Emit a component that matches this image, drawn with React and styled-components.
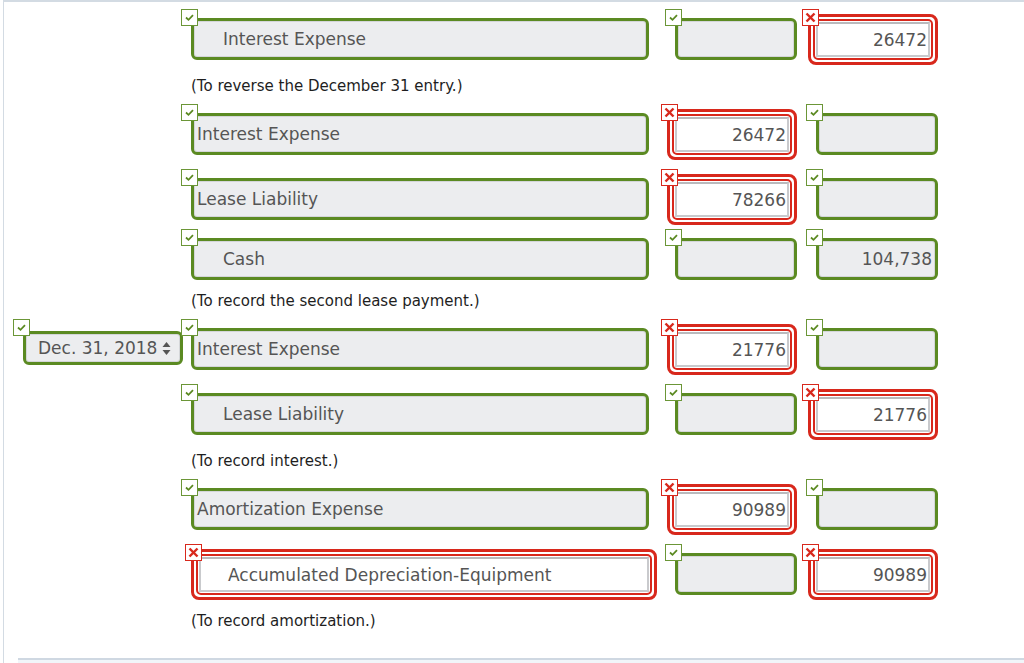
import React from 'react'
import styled, { createGlobalStyle } from 'styled-components'

const GlobalStyle = createGlobalStyle`
    html, body {
        margin: 0;
        padding: 0;
        background: #fff;
    }
    body {
        font-family: "DejaVu Sans", Verdana, sans-serif;
        overflow: hidden;
    }
`

const entries = [
    { account: 'Interest Expense', indent: true, debit: '', debitOk: true, credit: '26472', creditOk: false },
    { note: '(To reverse the December 31 entry.)' },
    { account: 'Interest Expense', debit: '26472', debitOk: false, credit: '', creditOk: true },
    { account: 'Lease Liability', debit: '78266', debitOk: false, credit: '', creditOk: true, height: 60 },
    { account: 'Cash', indent: true, debit: '', debitOk: true, credit: '104,738', creditOk: true },
    { note: '(To record the second lease payment.)' },
    { date: 'Dec. 31, 2018', account: 'Interest Expense', debit: '21776', debitOk: false, credit: '', creditOk: true },
    { account: 'Lease Liability', indent: true, debit: '', debitOk: true, credit: '21776', creditOk: false },
    { note: '(To record interest.)' },
    { account: 'Amortization Expense', debit: '90989', debitOk: false, credit: '', creditOk: true },
    { account: 'Accumulated Depreciation-Equipment', indent: true, accountOk: false, debit: '', debitOk: true, credit: '90989', creditOk: false },
    { note: '(To record amortization.)' }
]

function Mark({ ok }) {
    return (
        <MarkBox ok={ok}>
            <svg width="15" height="15" viewBox="0 0 15 15">
                {ok ? (
                    <polyline points="4,7.5 6.5,9.8 11,5.2" fill="none" stroke="#5b8a22" strokeWidth="1.8" />
                ) : (
                    <g stroke="#d8281c" strokeWidth="2.4" strokeLinecap="butt">
                        <line x1="3.5" y1="3.5" x2="11.5" y2="11.5" />
                        <line x1="11.5" y1="3.5" x2="3.5" y2="11.5" />
                    </g>
                )}
            </svg>
        </MarkBox>
    )
}

function Field({ ok = true, width, value, indent, numeric }) {
    return (
        <FieldWrap ok={ok}>
            <Mark ok={ok} />
            {ok ? (
                <GreenBox width={width}>
                    <FieldText indent={indent} numeric={numeric}>{value}</FieldText>
                </GreenBox>
            ) : (
                <RedOuter width={width + 8}>
                    <RedInner>
                        <RedField>
                            <FieldText indent={indent} numeric={numeric}>{value}</FieldText>
                        </RedField>
                    </RedInner>
                </RedOuter>
            )}
        </FieldWrap>
    )
}

function EntryRow({ date, account, indent, accountOk = true, debit, debitOk, credit, creditOk, height }) {
    const tall = !accountOk || !debitOk || !creditOk
    return (
        <Row height={height || (tall ? 65 : 60)}>
            <Cell width={160}>
                {date && (
                    <FieldWrap ok>
                        <Mark ok />
                        <DateSelect>
                            <span>{date}</span>
                            <Spinner>
                                <svg width="9" height="15" viewBox="0 0 9 15">
                                    <polygon points="4.5,1 8.5,6 0.5,6" fill="#555" />
                                    <polygon points="4.5,14 8.5,9 0.5,9" fill="#555" />
                                </svg>
                            </Spinner>
                        </DateSelect>
                    </FieldWrap>
                )}
            </Cell>
            <Cell width={466}>
                <Field ok={accountOk} width={458} value={account} indent={indent} />
            </Cell>
            <Cell width={130} right>
                <Field ok={debitOk} width={122} value={debit} numeric />
            </Cell>
            <Cell width={131} right>
                <Field ok={creditOk} width={122} value={credit} numeric />
            </Cell>
        </Row>
    )
}

export default function App() {
    return (
        <Page>
            <GlobalStyle />
            <Journal>
                {entries.map((entry, i) =>
                    entry.note
                        ? <Note key={i}>{entry.note}</Note>
                        : <EntryRow key={i} {...entry} />
                )}
            </Journal>
            <BottomPanel />
        </Page>
    )
}

const Page = styled.div`
    height: 663px;
    margin-left: 3px;
    border-left: 1px solid #d3dbe3;
    border-top: 2px solid #d3dbe3;
    box-sizing: border-box;
`

const Journal = styled.div`
    padding: 7px 0 0 19px;
`

const Row = styled.div`
    display: flex;
    height: ${p => p.height}px;
    gap: 8px;

    > div:nth-child(n + 3) {
        margin-left: 2px;
    }
`

const Cell = styled.div`
    width: ${p => p.width}px;
    display: flex;
    justify-content: ${p => (p.right ? 'flex-end' : 'flex-start')};
    align-items: flex-start;
`

const FieldWrap = styled.div`
    position: relative;
    margin-top: ${p => (p.ok ? 9 : 5)}px;
`

const MarkBox = styled.div`
    position: absolute;
    top: ${p => (p.ok ? -9 : -5)}px;
    left: ${p => (p.ok ? -10 : -6)}px;
    width: 15px;
    height: 15px;
    background: #fff;
    border: 1px solid ${p => (p.ok ? '#6b9637' : '#d8281c')};
    z-index: 1;
    svg {
        display: block;
    }
`

const GreenBox = styled.div`
    width: ${p => p.width}px;
    height: 42px;
    box-sizing: border-box;
    border: 3px solid #5b8a22;
    border-radius: 6px;
    background: #ecedef;
    box-shadow: inset 0 0 0 1px #d4d6d9;
    display: flex;
    align-items: center;
    padding: 0 3px;
`

const RedOuter = styled.div`
    width: ${p => p.width}px;
    height: 51px;
    box-sizing: border-box;
    border: 3px solid #d8281c;
    border-radius: 8px;
    background: #fff;
    padding: 2px;
    display: flex;
`

const RedInner = styled.div`
    flex: 1;
    border: 2px solid #d8281c;
    border-radius: 5px;
    padding: 1px;
    display: flex;
`

const RedField = styled.div`
    flex: 1;
    border: 2px solid #c9cacd;
    border-top-color: #b9babd;
    background: #fff;
    display: flex;
    align-items: center;
    padding: 0 1px;
`

const FieldText = styled.div`
    flex: 1;
    font-size: 17px;
    color: #555;
    white-space: nowrap;
    text-align: ${p => (p.numeric ? 'right' : 'left')};
    padding-left: ${p => (p.indent ? 26 : 0)}px;
`

const DateSelect = styled.div`
    width: 160px;
    height: 34px;
    box-sizing: border-box;
    margin-top: 3px;
    border: 3px solid #5b8a22;
    border-radius: 6px;
    background: #ecedef;
    box-shadow: inset 0 0 0 1px #d4d6d9;
    display: flex;
    align-items: center;
    padding: 0 6px 0 12px;
    font-size: 17px;
    color: #555;
    white-space: nowrap;
`

const Spinner = styled.span`
    margin-left: 5px;
    display: flex;
`

const Note = styled.div`
    height: 30px;
    line-height: 24px;
    padding-left: 168px;
    font-size: 15px;
    color: #1e1e1e;
`

const BottomPanel = styled.div`
    margin: 19px 0 0 14px;
    height: 40px;
    border-top: 2px solid #cfd8e2;
    background: #f1f5f9;
`
